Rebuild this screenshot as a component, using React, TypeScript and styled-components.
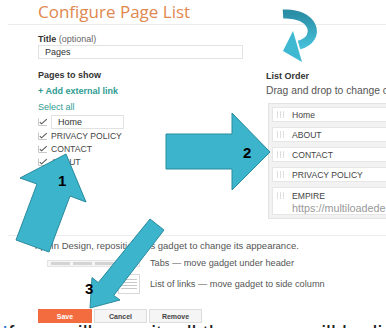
import React from 'react';
import styled, { createGlobalStyle } from 'styled-components';

const Global = createGlobalStyle`
  html, body { margin: 0; padding: 0; background: #fff; }
  body {
    width: 386px;
    height: 328px;
    overflow: hidden;
    font-family: "Liberation Sans", Arial, sans-serif;
    color: #333;
  }
`;

const Page = styled.div`
  position: relative;
  width: 386px;
  height: 328px;
  overflow: hidden;
  display: flex;
  flex-direction: column;
  & > * { flex-shrink: 0; }
`;

const Header = styled.header`
  height: 22px;
  padding-top: 2px;
  margin-left: 8px;
  padding-left: 30px;
  border-bottom: 1px solid #ececec;
`;

const Heading = styled.h1`
  margin: 0;
  font-family: "Open Sans", "Liberation Sans", sans-serif;
  font-weight: 400;
  font-size: 17px;
  line-height: 20px;
  color: #e0884f;
`;

const Section = styled.div<{ $mt?: number }>`
  padding-left: 38px;
  margin-top: ${(p) => p.$mt ?? 0}px;
`;

const Label = styled.div<{ $mt?: number }>`
  font-size: 9px;
  line-height: 12px;
  font-weight: 700;
  color: #333;
  margin-top: ${(p) => p.$mt ?? 0}px;
  white-space: nowrap;
`;

const Light = styled.span`
  font-weight: 400;
  color: #666;
`;

const TextInput = styled.div<{ $w: number }>`
  box-sizing: border-box;
  width: ${(p) => p.$w}px;
  height: 14px;
  border: 1px solid #e2e2e2;
  background: #fff;
  font-size: 9px;
  line-height: 12px;
  padding-left: 6px;
  color: #333;
`;

const Columns = styled.div`
  display: grid;
  grid-template-columns: 228px 160px;
  margin-top: 10px;
  padding-left: 38px;
  height: 150px;
`;

const Column = styled.div`
  display: flex;
  flex-direction: column;
  & > * { flex-shrink: 0; }
`;

const Link = styled.div<{ $mt?: number; $bold?: boolean }>`
  font-size: 9px;
  line-height: 12px;
  font-weight: ${(p) => (p.$bold ? 700 : 400)};
  color: #2f9b93;
  margin-top: ${(p) => p.$mt ?? 0}px;
`;

const CheckRow = styled.div<{ $h: number; $mt?: number }>`
  display: flex;
  align-items: center;
  height: ${(p) => p.$h}px;
  margin-top: ${(p) => p.$mt ?? 0}px;
  gap: 3px;
  font-size: 8.6px;
  color: #444;
  white-space: nowrap;
`;

const Box = styled.span`
  display: inline-flex;
  width: 10px;
  height: 8px;
  flex: none;
`;

const Check = () => (
  <Box>
    <svg width="10" height="8" viewBox="0 0 10 8">
      <path d="M0.5 0.5 V7.5 H9" fill="none" stroke="#c8c8c8" strokeWidth="1" />
      <path d="M1.8 4.2 L3.6 5.8 L8.8 1.2" fill="none" stroke="#555" strokeWidth="1.1" />
    </svg>
  </Box>
);

const Hint = styled.div`
  font-size: 10.3px;
  line-height: 12px;
  color: #555;
  margin-top: 3px;
  white-space: nowrap;
`;

const OrderBox = styled.div`
  margin-top: 6px;
  margin-left: 2px;
  box-sizing: border-box;
  width: 150px;
  background: #f2f2f2;
  border: 1px solid #e3e3e3;
  padding: 3px;
  display: flex;
  flex-direction: column;
  gap: 5px;
`;

const OrderItem = styled.div<{ $tall?: boolean }>`
  box-sizing: border-box;
  height: ${(p) => (p.$tall ? 28 : 15)}px;
  background: #fff;
  border: 1px solid #e6e6e6;
  display: flex;
  align-items: ${(p) => (p.$tall ? 'flex-start' : 'center')};
  padding-left: 3px;
  padding-top: ${(p) => (p.$tall ? 2 : 0)}px;
  gap: 7px;
  font-size: 8.6px;
  line-height: 12px;
  color: #444;
  white-space: nowrap;
`;

const Handle = styled.span<{ $top?: number }>`
  width: 9px;
  height: 7px;
  flex: none;
  margin-top: ${(p) => p.$top ?? 0}px;
  background-image: radial-gradient(circle, #cfcfcf 0.7px, transparent 0.9px);
  background-size: 3px 2.4px;
`;

const ItemText = styled.div`
  display: flex;
  flex-direction: column;
`;

const Url = styled.span`
  color: #999;
  font-size: 10.8px;
`;

const Divider = styled.div`
  margin-top: 16px;
  margin-left: 8px;
  border-top: 1px solid #ececec;
`;

const Tip = styled.div`
  padding-left: 33px;
  margin-top: 4px;
  font-size: 9.5px;
  line-height: 12px;
  color: #555;
  white-space: nowrap;
`;

const Layouts = styled.div`
  display: grid;
  grid-template-columns: 93px auto;
  column-gap: 10px;
  row-gap: 2px;
  padding-left: 47px;
  margin-top: 2px;
  font-size: 9.2px;
  color: #555;
  white-space: nowrap;
`;

const Illus = styled.div<{ $h: number }>`
  height: ${(p) => p.$h}px;
  display: flex;
  align-items: center;
  justify-content: flex-end;
`;

const TabsBar = styled.div`
  box-sizing: border-box;
  width: 93px;
  height: 7px;
  border: 1px solid #e4e4e4;
  background: #f4f4f4;
  display: flex;
  align-items: center;
  gap: 3px;
  padding: 0 3px;
`;

const TabSeg = styled.span`
  width: 19px;
  height: 3px;
  background: #d4d4d4;
`;

const ListIcon = styled.div`
  box-sizing: border-box;
  width: 22px;
  height: 20px;
  border: 1px solid #d8d8d8;
  background: #fff;
  display: flex;
  flex-direction: column;
  justify-content: center;
  gap: 2px;
  padding: 0 2px;
`;

const ListLine = styled.span`
  height: 1px;
  background: #c9c9c9;
`;

const LayoutText = styled.div<{ $h: number }>`
  height: ${(p) => p.$h}px;
  line-height: ${(p) => p.$h}px;
`;

const Buttons = styled.div`
  display: flex;
  gap: 2px;
  padding-left: 38px;
  margin-top: 15px;
`;

const Button = styled.div<{ $primary?: boolean; $w: number }>`
  box-sizing: border-box;
  width: ${(p) => p.$w}px;
  height: 14px;
  display: flex;
  align-items: center;
  justify-content: center;
  font-size: 7px;
  font-weight: 700;
  background: ${(p) => (p.$primary ? '#f26c40' : '#f5f5f5')};
  color: ${(p) => (p.$primary ? '#fff' : '#444')};
  border: 1px solid ${(p) => (p.$primary ? '#f26c40' : '#dcdcdc')};
`;

const CutText = styled.p`
  margin: 0;
  padding-left: 2px;
  font-size: 22px;
  line-height: 22px;
  color: #222;
  white-space: nowrap;
`;

const Blue = styled.span`
  color: #2f7fd8;
`;

const Overlay = styled.svg`
  position: absolute;
  left: 0;
  top: 0;
  pointer-events: none;
`;

const Num = styled.text`
  font-family: "Liberation Sans", Arial, sans-serif;
  font-weight: 700;
  font-size: 15px;
  fill: #000;
`;

const fill = '#3bb4cc';
const edge = '#2a8a9d';

const Arrows = () => (
  <Overlay width="386" height="328" viewBox="0 0 386 328">
    <defs>
      <linearGradient id="curve" x1="0" y1="0" x2="0" y2="1">
        <stop offset="0" stopColor="#2a8ea6" />
        <stop offset="1" stopColor="#44bdd6" />
      </linearGradient>
    </defs>
    <path d="M283 14 C 313 12, 323 38, 299 45" fill="none" stroke="url(#curve)" strokeWidth="9" />
    <polygon points="283,51 293,31 302,62" fill="#3fb8d2" />
    <polygon
      points="66,154 86,202 70,196 49,252 16,240 37,184 20,178"
      fill={fill}
      stroke={edge}
      strokeWidth="1"
    />
    <Num x="58" y="186">1</Num>
    <polygon
      points="166,134 232,134 232,113 270,152 232,190 232,169 166,169"
      fill={fill}
      stroke={edge}
      strokeWidth="1"
    />
    <Num x="243" y="158">2</Num>
    <polygon
      points="90,308 120,300 113.7,295.4 164,230 150,219 98.3,282.6 92,277.6"
      fill={fill}
      stroke={edge}
      strokeWidth="1"
    />
    <Num x="85" y="294">3</Num>
  </Overlay>
);

export default function App() {
  return (
    <>
      <Global />
      <Page>
        <Header>
          <Heading>Configure Page List</Heading>
        </Header>
        <Section $mt={8}>
          <Label>
            Title <Light>(optional)</Light>
          </Label>
          <TextInput $w={205}>Pages</TextInput>
        </Section>
        <Columns>
          <Column>
            <Label>Pages to show</Label>
            <Link $bold $mt={4}>+ Add external link</Link>
            <Link $mt={4}>Select all</Link>
            <CheckRow $h={15} $mt={1}>
              <Check />
              <TextInput $w={73}>Home</TextInput>
            </CheckRow>
            <CheckRow $h={12} $mt={1}>
              <Check />
              PRIVACY POLICY
            </CheckRow>
            <CheckRow $h={12} $mt={1}>
              <Check />
              CONTACT
            </CheckRow>
            <CheckRow $h={12} $mt={1}>
              <Check />
              ABOUT
            </CheckRow>
          </Column>
          <Column>
            <Label $mt={1}>List Order</Label>
            <Hint>Drag and drop to change order</Hint>
            <OrderBox>
              <OrderItem><Handle />Home</OrderItem>
              <OrderItem><Handle />ABOUT</OrderItem>
              <OrderItem><Handle />CONTACT</OrderItem>
              <OrderItem><Handle />PRIVACY POLICY</OrderItem>
              <OrderItem $tall>
                <Handle $top={2} />
                <ItemText>
                  <span>EMPIRE</span>
                  <Url>https://multiloadedempire.com</Url>
                </ItemText>
              </OrderItem>
            </OrderBox>
          </Column>
        </Columns>
        <Divider />
        <Tip>Tip: In Design, reposition this gadget to change its appearance.</Tip>
        <Layouts>
          <Illus $h={18}>
            <TabsBar>
              <TabSeg />
              <TabSeg />
              <TabSeg />
            </TabsBar>
          </Illus>
          <LayoutText $h={18}>Tabs — move gadget under header</LayoutText>
          <Illus $h={20}>
            <ListIcon>
              <ListLine />
              <ListLine />
              <ListLine />
              <ListLine />
            </ListIcon>
          </Illus>
          <LayoutText $h={20}>List of links — move gadget to side column</LayoutText>
        </Layouts>
        <Buttons>
          <Button $primary $w={54}>Save</Button>
          <Button $w={53}>Cancel</Button>
          <Button $w={53}>Remove</Button>
        </Buttons>
        <CutText>
          <Blue>I</Blue>f you will save it, all the pages will be listed in the blog
        </CutText>
        <Arrows />
      </Page>
    </>
  );
}
